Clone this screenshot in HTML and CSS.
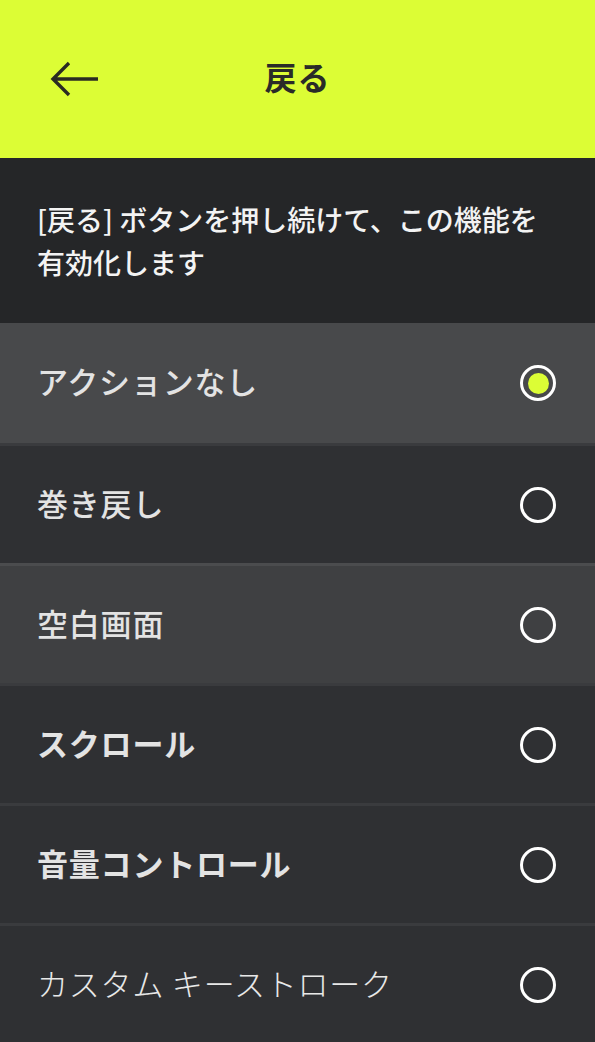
FILE: index.html
```html
<!DOCTYPE html>
<html lang="ja">
<head>
<meta charset="utf-8">
<link rel="stylesheet" href="styles.css">
</head>
<body>
<div class="screen">
  <header class="topbar">
    <button class="back" aria-label="戻る">
      <svg width="50" height="36" viewBox="0 0 50 36">
        <path d="M19 2 L3 18 L19 34 M3 18 H48" fill="none" stroke="#2a2b22" stroke-width="3.4" stroke-linecap="butt" stroke-linejoin="miter"/>
      </svg>
    </button>
    <h1 class="title">戻る</h1>
  </header>
  <section class="desc">
    <p>[戻る] ボタンを押し続けて、この機能を有効化します</p>
  </section>
  <ul class="options">
    <li class="option selected"><span class="label">アクションなし</span><span class="radio on"></span></li>
    <li class="option"><span class="label">巻き戻し</span><span class="radio"></span></li>
    <li class="option focused"><span class="label">空白画面</span><span class="radio"></span></li>
    <li class="option"><span class="label heavy">スクロール</span><span class="radio"></span></li>
    <li class="option"><span class="label heavy">音量コントロール</span><span class="radio"></span></li>
    <li class="option"><span class="label light">カスタム キーストローク</span><span class="radio"></span></li>
  </ul>
</div>
</body>
</html>
```
FILE: styles.css
```css
* { box-sizing: border-box; }
html, body {
  margin: 0;
  padding: 0;
  background: #2f3033;
}
body {
  font-family: "Noto Sans CJK JP", "Noto Sans", sans-serif;
  width: 595px;
  height: 1042px;
  overflow: hidden;
}
.screen {
  display: flex;
  flex-direction: column;
}
.topbar {
  height: 158px;
  background: #dcfd35;
  position: relative;
  display: flex;
  align-items: center;
  justify-content: center;
}
.back {
  position: absolute;
  left: 50px;
  top: 61px;
  padding: 0;
  margin: 0;
  border: 0;
  background: none;
  display: flex;
}
.title {
  margin: 0 0 6px 0;
  font-size: 32px;
  font-weight: 700;
  color: #2a2b28;
  line-height: 1;
  letter-spacing: 1px;
}
.desc {
  height: 165px;
  background: #252628;
  padding: 40px 44px 0 37px;
}
.desc p {
  margin: 0;
  color: #f3f3f3;
  font-size: 28px;
  font-weight: 500;
  line-height: 43px;
}
.options {
  list-style: none;
  margin: 0;
  padding: 0;
}
.option {
  height: 120px;
  display: flex;
  align-items: center;
  justify-content: space-between;
  padding: 0 39px 0 37px;
  background: #2f3033;
  border-top: 3px solid #3a3b3e;
}
.option.selected {
  background: #48494b;
  border-top: 0;
}
.option.focused {
  background: #3f4042;
  border-top-color: #4b4c4e;
}
.label {
  color: #e3e3e3;
  font-size: 31px;
  font-weight: 500;
  letter-spacing: 0.8px;
  line-height: 1;
  margin-bottom: 5px;
}
.label.heavy {
  font-weight: 700;
}
.label.light {
  font-weight: 300;
  color: #e8e8e8;
}
.radio {
  width: 36px;
  height: 36px;
  border-radius: 50%;
  border: 3.5px solid #ffffff;
  display: flex;
  align-items: center;
  justify-content: center;
}
.radio.on::after {
  content: "";
  width: 21px;
  height: 21px;
  border-radius: 50%;
  background: #dcfd35;
}
```
